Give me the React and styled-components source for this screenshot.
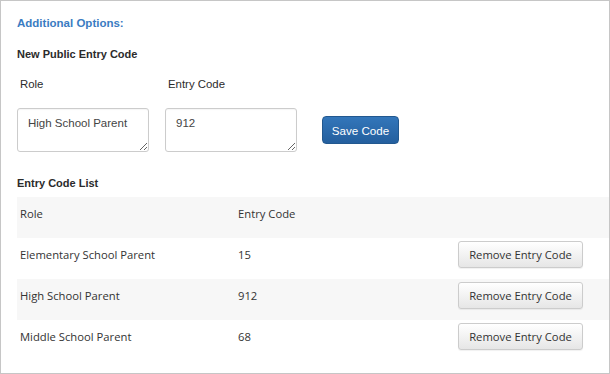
import React from "react"
import styled, { createGlobalStyle } from "styled-components"

const GlobalStyle = createGlobalStyle`
  html, body {
    margin: 0;
    padding: 0;
    background: #ffffff;
  }
`

const entries = [
  { role: "Elementary School Parent", code: "15" },
  { role: "High School Parent", code: "912" },
  { role: "Middle School Parent", code: "68" },
]

function App() {
  return (
    <>
      <GlobalStyle />
      <Panel>
        <Title>Additional Options:</Title>
        <SubTitle>New Public Entry Code</SubTitle>
        <FormRow>
          <Field>
            <FieldLabel>Role</FieldLabel>
            <TextBox defaultValue="High School Parent" />
          </Field>
          <Field>
            <FieldLabel>Entry Code</FieldLabel>
            <TextBox defaultValue="912" />
          </Field>
          <SaveButton>Save Code</SaveButton>
        </FormRow>
        <ListTitle>Entry Code List</ListTitle>
        <Table>
          <Row striped>
            <RoleCell>Role</RoleCell>
            <CodeCell>Entry Code</CodeCell>
            <ActionCell />
          </Row>
          {entries.map((e, i) => (
            <Row key={e.role} striped={i % 2 === 1}>
              <RoleCell>{e.role}</RoleCell>
              <CodeCell>{e.code}</CodeCell>
              <ActionCell>
                <RemoveButton>Remove Entry Code</RemoveButton>
              </ActionCell>
            </Row>
          ))}
        </Table>
      </Panel>
    </>
  )
}
export default App

const Panel = styled.div`
  box-sizing: border-box;
  width: 610px;
  height: 374px;
  border: 1px solid #c6c6c6;
  padding: 15px 0 0 16px;
  font-family: "Liberation Sans", Arial, sans-serif;
  color: #333333;
`
const Title = styled.div`
  font-size: 11.5px;
  font-weight: bold;
  line-height: 14px;
  color: #3a7cc2;
`
const SubTitle = styled.div`
  margin-top: 16px;
  font-size: 11px;
  font-weight: bold;
  line-height: 16px;
  color: #2b2b2b;
`
const FormRow = styled.div`
  display: flex;
  align-items: flex-end;
  gap: 16px;
  margin-top: 14px;
`
const Field = styled.div`
  display: flex;
  flex-direction: column;
`
const FieldLabel = styled.div`
  font-size: 11.4px;
  line-height: 16px;
  padding-left: 3px;
  color: #2b2b2b;
  margin-bottom: 16px;
`
const TextBox = styled.textarea`
  box-sizing: border-box;
  width: 132px;
  height: 44px;
  margin: 0;
  padding: 6px 10px;
  border: 1px solid #cccccc;
  border-radius: 3px;
  font-family: "Liberation Sans", Arial, sans-serif;
  font-size: 11.5px;
  line-height: 16px;
  color: #444444;
  resize: vertical;
  outline: none;
  box-shadow: inset 0 1px 1px rgba(0, 0, 0, 0.04);
`
const SaveButton = styled.button`
  box-sizing: border-box;
  width: 77px;
  height: 28px;
  margin: 0 0 8px 9px;
  padding: 0;
  border: 1px solid #22588f;
  border-radius: 4px;
  background: linear-gradient(#3376ba, #245f9e);
  color: #ffffff;
  font-family: "Liberation Sans", Arial, sans-serif;
  font-size: 11.6px;
`
const ListTitle = styled.div`
  margin-top: 23px;
  font-size: 11px;
  font-weight: bold;
  line-height: 16px;
  color: #2b2b2b;
`
const Table = styled.div`
  margin-top: 6px;
  font-family: "Open Sans", sans-serif;
  font-size: 11.25px;
  color: #333333;
`
const Row = styled.div`
  box-sizing: border-box;
  display: grid;
  grid-template-columns: 218px 1fr auto;
  align-items: start;
  height: 41px;
  padding-top: 3px;
  line-height: 27px;
  background: ${({ striped }) => (striped ? "#f7f7f7" : "#ffffff")};
`
const RoleCell = styled.div`
  padding-left: 3px;
`
const CodeCell = styled.div`
  padding-left: 3px;
`
const ActionCell = styled.div`
  padding-right: 26px;
  display: flex;
`
const RemoveButton = styled.button`
  box-sizing: border-box;
  width: 125px;
  height: 27px;
  margin: 0;
  padding: 0;
  border: 1px solid #cccccc;
  border-radius: 3px;
  background: linear-gradient(#ffffff, #e6e6e6);
  box-shadow: 0 1px 1px rgba(0, 0, 0, 0.06);
  color: #333333;
  font-family: "Open Sans", sans-serif;
  font-size: 11.25px;
`
